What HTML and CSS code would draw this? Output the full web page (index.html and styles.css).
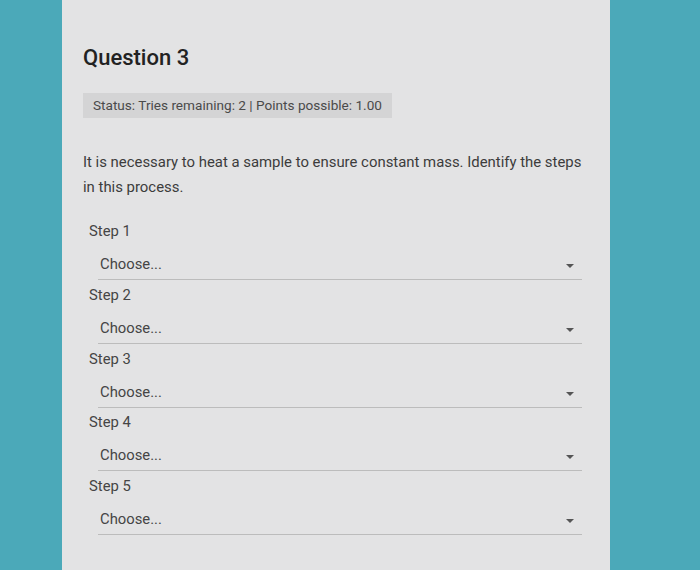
FILE: index.html
```html
<!DOCTYPE html>
<html lang="en">
<head>
  <meta charset="UTF-8" />
  <meta name="viewport" content="width=device-width, initial-scale=1.0"/>
  <title>Question 3</title>
  <link rel="stylesheet" href="styles.css">
</head>
<body>

<!-- QUESTION PANEL -->
<div class="panel">
  <h2 class="q-title">Question 3</h2>
  <div class="status">Status: Tries remaining: 2 | Points possible: 1.00</div>
  <p class="q-text">It is necessary to heat a sample to ensure constant mass. Identify the steps in this process.</p>

  <div class="steps">
    <div class="step">
      <div class="step-label">Step 1</div>
      <div class="choose">Choose...<span class="caret"></span></div>
    </div>
    <div class="step">
      <div class="step-label">Step 2</div>
      <div class="choose">Choose...<span class="caret"></span></div>
    </div>
    <div class="step">
      <div class="step-label">Step 3</div>
      <div class="choose">Choose...<span class="caret"></span></div>
    </div>
    <div class="step">
      <div class="step-label">Step 4</div>
      <div class="choose">Choose...<span class="caret"></span></div>
    </div>
    <div class="step">
      <div class="step-label">Step 5</div>
      <div class="choose">Choose...<span class="caret"></span></div>
    </div>
  </div>
</div>

</body>
</html>
```

FILE: styles.css
```css
* { box-sizing: border-box; }
body, html {
  margin: 0; padding: 0;
  height: 100%;
  font-family: Roboto, 'Liberation Sans', sans-serif;
  background-color: #4ba9b9;
  overflow: hidden;
}
.panel {
  margin-left: 62px;
  width: 548px;
  height: 100%;
  background: #e3e3e4;
  padding: 44px 28px 0 21px;
  color: #3a3a3a;
}
.q-title {
  margin: 0;
  font-size: 22px; line-height: 28px; font-weight: 500;
  color: #222;
}
.status {
  display: inline-block;
  margin-top: 21px;
  height: 25px; line-height: 25px;
  padding: 0 10px;
  background: #d4d4d5;
  font-size: 13.6px;
  color: #4a4a4a;
}
.q-text {
  margin: 32px 0 0;
  font-size: 14.9px; line-height: 25px;
  color: #3c3c3c;
}
.steps { margin-top: 21px; padding-left: 6px; }
.step + .step { margin-top: 4.8px; }
.step-label {
  font-size: 14.8px; line-height: 20px;
  color: #454545;
}
.choose {
  position: relative;
  margin: 13px 0 0 9px;
  padding: 0 0 5px 2px;
  font-size: 14.8px; line-height: 20px;
  color: #454545;
  border-bottom: 1px solid #bcbcbc;
}
.caret {
  position: absolute; right: 8px; top: 10px;
  width: 0; height: 0;
  border-left: 4px solid transparent;
  border-right: 4px solid transparent;
  border-top: 4px solid #555;
}
```
